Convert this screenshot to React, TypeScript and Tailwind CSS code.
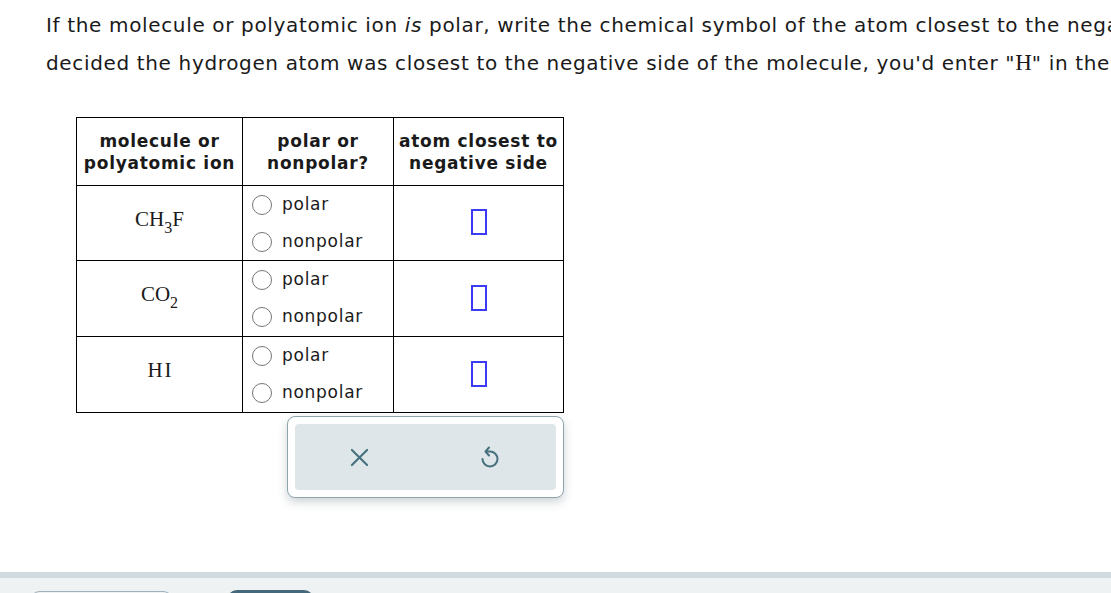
import React from 'react'

const rows = [
  { id: 'ch3f', h: 'h-[75px]', formula: <>CH<sub className="relative top-[2px] text-[16px] leading-none align-sub">3</sub>F</> },
  { id: 'co2', h: 'h-[76px]', formula: <>CO<sub className="relative top-[2px] text-[16px] leading-none align-sub">2</sub></> },
  { id: 'hi', h: 'h-[76px]', formula: <>H<span className="ml-[2px]">I</span></> },
]

function Radio({ label }: { label: string }) {
  return (
    <label className="flex h-[37px] items-center gap-[10px]">
      <span className="h-[20px] w-[20px] shrink-0 rounded-full border-[1.5px] border-[#767676] bg-white" />
      <span>{label}</span>
    </label>
  )
}

export default function App() {
  return (
    <div
      className="relative h-[593px] w-[1111px] overflow-hidden bg-white tracking-[0.72px] text-[#1a1a1a]"
      style={{ fontFamily: '"DejaVu Sans", Verdana, sans-serif' }}
    >
      {/* Instructions */}
      <div className="whitespace-nowrap pl-[46px] pt-[7px] text-[20px] leading-[37px] tracking-[0.65px]">
        <p>
          If the molecule or polyatomic ion <i>is</i> polar, write the chemical symbol of the atom closest to the nega
        </p>
        <p>
          decided the hydrogen atom was closest to the negative side of the molecule, you'd enter "
          <span className="text-[23px] tracking-normal" style={{ fontFamily: '"Liberation Serif", serif' }}>H</span>
          " in the
        </p>
      </div>

      {/* Table + tools */}
      <div className="ml-[76px] mt-[35px] w-[488px]">
        <table className="w-full border-collapse text-[17px]">
          <thead>
            <tr className="h-[68px] text-center font-bold leading-[22px]">
              <th className="w-[166px] border border-black px-1">molecule or<br />polyatomic ion</th>
              <th className="w-[151px] border border-black px-1">polar or<br />nonpolar?</th>
              <th className="border border-black px-1">atom closest to<br />negative side</th>
            </tr>
          </thead>
          <tbody>
            {rows.map(r => (
              <tr key={r.id} className={r.h}>
                <td
                  className="border border-black pb-[7px] text-center text-[21px] tracking-normal"
                  style={{ fontFamily: '"Liberation Serif", serif' }}
                >
                  {r.formula}
                </td>
                <td className="border border-black pl-[9px]">
                  <Radio label="polar" />
                  <Radio label="nonpolar" />
                </td>
                <td className="border border-black">
                  <div className="mx-auto mb-[2px] h-[26px] w-[16px] border-2 border-[#3b3bf5]" />
                </td>
              </tr>
            ))}
          </tbody>
        </table>

        <div className="ml-auto mt-[3px] w-[277px] rounded-[8px] border border-[#8ea4ac] bg-white p-[7px] shadow-[0_4px_10px_rgba(60,80,90,0.25)]">
          <div className="flex h-[66px] items-center justify-around rounded-[4px] bg-[#dfe6e9] text-[#46707e]">
            <svg width="19" height="19" viewBox="0 0 20 20" fill="none" stroke="currentColor" strokeWidth="2.2" strokeLinecap="round">
              <path d="M2 2 L18 18 M18 2 L2 18" />
            </svg>
            <svg width="22" height="24" viewBox="0 0 22 24" fill="none" stroke="currentColor" strokeWidth="2" strokeLinecap="round" strokeLinejoin="round">
              <path d="M7 6.5 H11 A7.5 7.5 0 1 1 3.5 14" />
              <path d="M10 2.5 L6.5 6.5 L10 10.5" />
            </svg>
          </div>
        </div>
      </div>

      {/* Bottom bar */}
      <div className="absolute bottom-0 left-0 right-0 h-[21px] border-t-[6px] border-[#d1dadf] bg-[#eef2f3]">
        <div className="absolute left-[30px] top-[13px] h-[10px] w-[143px] rounded-t-[10px] border border-[#9fb1b9] bg-[#eef2f3]" />
        <div className="absolute left-[227px] top-[12px] h-[10px] w-[87px] rounded-t-[10px] bg-[#45697a]" />
      </div>
    </div>
  )
}
